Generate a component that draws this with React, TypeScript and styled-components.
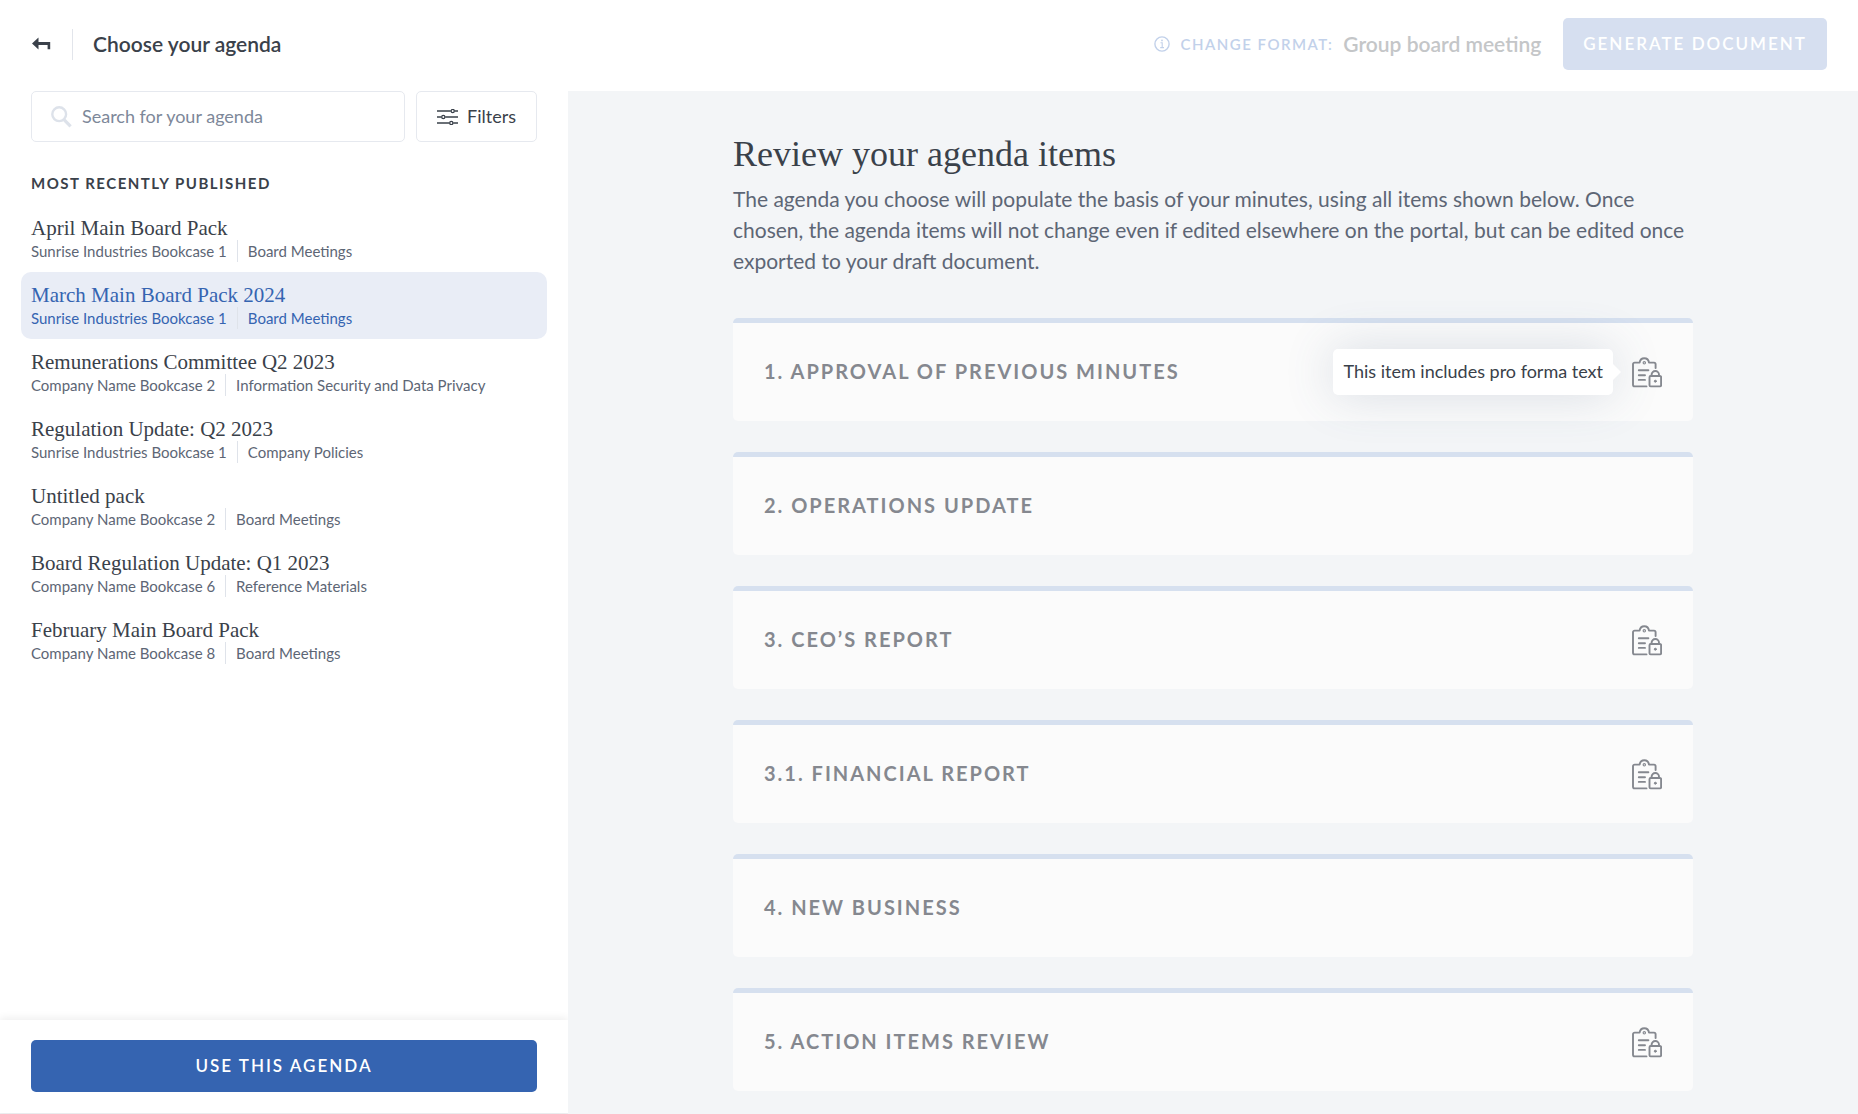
import React from "react";
import styled, { createGlobalStyle, css } from "styled-components";

const sans = `Lato, "Open Sans", "Liberation Sans", sans-serif`;
const serif = `"Liberation Serif", "Times New Roman", serif`;

const GlobalStyle = createGlobalStyle`
  *, *::before, *::after { box-sizing: border-box; }
  body { margin: 0; background: #fff; color: #3a414a; font-family: ${sans}; font-size: 18px; }
  h1, h2, h3, p, ul, ol { margin: 0; padding: 0; font-weight: 400; }
  ul, ol { list-style: none; }
  button, input { font: inherit; color: inherit; }
  svg { display: block; flex: none; }
`;

const Page = styled.div`
  min-height: 100vh;
  display: flex;
  flex-direction: column;
`;

const Header = styled.header`
  display: flex;
  align-items: center;
  justify-content: space-between;
  min-height: 91px;
  padding: 0 31px 3px;
`;

const HeaderGroup = styled.div`
  display: flex;
  align-items: center;
`;

const IconButton = styled.button`
  padding: 0;
  border: 0;
  background: none;
  cursor: pointer;
`;

const HeaderDivider = styled.span`
  width: 1px;
  height: 31px;
  margin: 0 20px 0 21px;
  background: #e2e5eb;
`;

const PageTitle = styled.h1`
  padding-bottom: 2px;
  font-size: 21px;
  font-weight: 600;
  line-height: 31px;
`;

const FormatButton = styled.button`
  display: flex;
  align-items: center;
  gap: 10px;
  padding: 0;
  border: 0;
  background: none;
  color: #c2d1ea;
`;

const FormatLabel = styled.span`
  font-size: 15px;
  font-weight: 600;
  letter-spacing: 1.5px;
`;

const FormatValue = styled.span`
  padding-bottom: 2px;
  color: #c4c6c8;
  font-size: 21px;
  font-weight: 600;
`;

const SolidButton = styled.button<{ $wide?: boolean }>`
  height: 52px;
  padding: 0 20px 2px;
  border: 0;
  border-radius: 5px;
  background: #3564b1;
  color: #fff;
  font-size: 17px;
  font-weight: 600;
  letter-spacing: 2px;
  cursor: pointer;
  ${(p) => p.$wide && css`width: 100%;`}
  &:disabled { background: #d6dff0; cursor: default; }
  ${HeaderGroup} & { margin-left: 22px; }
`;

const Body = styled.div`
  flex: 1;
  display: flex;
`;

const Sidebar = styled.aside`
  flex: none;
  width: 568px;
  display: flex;
  flex-direction: column;
  border-bottom: 1px solid #eff0f2;
`;

const SearchRow = styled.div`
  display: flex;
  gap: 11px;
  padding: 0 31px;
`;

const outlined = css`
  display: flex;
  align-items: center;
  height: 51px;
  border: 1px solid #e6e9ef;
  border-radius: 5px;
  background: #fff;
`;

const SearchField = styled.label`
  ${outlined}
  flex: 1;
  gap: 10px;
  padding: 0 19px;
`;

const SearchInput = styled.input`
  flex: 1;
  min-width: 0;
  padding: 0 0 2px;
  border: 0;
  outline: 0;
  background: none;
  &::placeholder { color: #7d8899; opacity: 1; }
`;

const FilterButton = styled.button`
  ${outlined}
  gap: 9px;
  padding: 0 20px;
  cursor: pointer;
`;

const FilterLabel = styled.span`
  padding-bottom: 2px;
`;

const SectionTitle = styled.h2`
  padding: 30px 31px 0;
  font-size: 15px;
  font-weight: 700;
  line-height: 22px;
  letter-spacing: 1.5px;
`;

const PackList = styled.ul`
  margin: 11px 21px 0;
`;

const PackButton = styled.button<{ $selected?: boolean }>`
  display: block;
  width: 100%;
  height: 67px;
  padding: 0 10px;
  border: 0;
  border-radius: 10px;
  background: ${(p) => (p.$selected ? "#e9edf6" : "transparent")};
  color: ${(p) => (p.$selected ? "#3564b1" : "#3a414a")};
  text-align: left;
  cursor: pointer;
`;

const PackName = styled.span`
  display: block;
  font-family: ${serif};
  font-size: 21px;
  line-height: 24px;
`;

const PackMeta = styled.span<{ $selected?: boolean }>`
  display: flex;
  align-items: center;
  height: 22px;
  color: ${(p) => (p.$selected ? "#3564b1" : "#5d6675")};
  font-size: 15px;
`;

const MetaDivider = styled.span`
  width: 1px;
  height: 22px;
  margin: 0 10px;
  background: #dfe3ea;
`;

const SidebarFooter = styled.div`
  margin-top: auto;
  padding: 20px 31px 21px;
  background: #fff;
  box-shadow: 0 -2px 8px rgba(0, 0, 0, 0.07);
`;

const Main = styled.main`
  flex: 1;
  min-width: 0;
  padding: 42px 31px 16px;
  background: #f3f5f7;
`;

const Content = styled.div`
  max-width: 960px;
  margin: 0 auto;
`;

const ReviewTitle = styled.h2`
  font-family: ${serif};
  font-size: 36px;
  line-height: 42px;
`;

const Intro = styled.p`
  padding-top: 8px;
  color: #5d6675;
  font-size: 21px;
  line-height: 31px;
`;

const AgendaList = styled.ol`
  display: grid;
  gap: 31px;
  margin-top: 42px;
`;

const AgendaCard = styled.li`
  display: flex;
  align-items: center;
  justify-content: space-between;
  height: 103px;
  padding: 0 31px;
  border-top: 5px solid #d6e0ef;
  border-radius: 5px;
  background: #fbfbfb;
`;

const AgendaName = styled.h3`
  padding-bottom: 2px;
  color: #85888f;
  font-size: 20px;
  font-weight: 700;
  letter-spacing: 2px;
  text-transform: uppercase;
`;

const ProForma = styled.span`
  position: relative;
  color: #85888f;
`;

const ProFormaIconBox = styled.span`
  position: relative;
  z-index: 1;
  display: block;
`;

const Tooltip = styled.span`
  position: absolute;
  top: 50%;
  right: calc(100% + 19px);
  transform: translateY(-50%);
  padding: 0 10px 2px;
  border-radius: 5px;
  background: #fff;
  box-shadow: 0 0 50px rgba(70, 95, 130, 0.2);
  color: #3a414a;
  font-size: 18px;
  line-height: 44px;
  white-space: nowrap;
  &::after {
    content: "";
    position: absolute;
    top: 15px;
    left: 100%;
    border: 8px solid transparent;
    border-left-color: #fff;
    border-right-width: 0;
  }
`;

const BackIcon = () => (
  <svg width="20" height="14" viewBox="0 0 20 14" aria-hidden="true">
    <path d="M1 6.500 7.500.500V4.900H19.200V12.300H16.600V8.100H7.500V12.500Z" fill="#3a414a" />
  </svg>
);

const InfoIcon = () => (
  <svg width="16" height="16" viewBox="0 0 16 16" fill="none" stroke="currentColor" aria-hidden="true">
    <circle cx="8" cy="8" r="7.1" strokeWidth="1.4" />
    <path d="M6.5 6.8H8.2v4.6M6.2 11.6h3.8" strokeWidth="1.1" />
    <circle cx="8" cy="4.4" r=".9" fill="currentColor" stroke="none" />
  </svg>
);

const SearchIcon = () => (
  <svg width="21" height="22" viewBox="0 0 21 22" fill="none" stroke="#dde2ea" aria-hidden="true">
    <circle cx="8.2" cy="8.2" r="6.9" strokeWidth="2.4" />
    <path d="m13 13.6 6.6 6.8" strokeWidth="3.2" />
  </svg>
);

const FilterIcon = () => (
  <svg width="21" height="16" viewBox="0 0 21 16" fill="none" stroke="#3a414a" strokeWidth="1.6" aria-hidden="true">
    <path d="M0 2h13.8M17.6 2H21M0 8h4.4M8.2 8H21M0 14h12.4M16.2 14H21" />
    <circle cx="15.7" cy="2" r="1.6" strokeWidth="1.3" />
    <circle cx="6.3" cy="8" r="1.6" strokeWidth="1.3" />
    <circle cx="14.3" cy="14" r="1.6" strokeWidth="1.3" />
  </svg>
);

const ProFormaIcon = () => (
  <svg
    width="30"
    height="31"
    viewBox="0 0 30 31"
    fill="none"
    stroke="currentColor"
    strokeWidth="1.9"
    strokeLinecap="round"
    strokeLinejoin="round"
    role="img"
    aria-label="Includes pro forma text"
  >
    <path d="M14.5 29.4H2.6a1.6 1.6 0 0 1-1.6-1.6V7.2a1.6 1.6 0 0 1 1.6-1.6h5C8 2.8 9.800 1.200 12.300 1.200S16.600 2.800 17 5.600h5a1.600 1.600 0 0 1 1.600 1.600V11" />
    <circle cx="12.300" cy="5.800" r="1.200" strokeWidth="1.100" />
    <path d="M6.800 13.300h9.600M6.800 18.200h6.200M6.800 22.900h6.200" />
    <rect x="17.500" y="19" width="11.600" height="10.400" rx="1.200" />
    <path d="M19.600 19v-1.300a3.700 3.700 0 0 1 7.400 0V19" />
    <circle cx="23.300" cy="24.200" r="1" fill="currentColor" strokeWidth="1" />
  </svg>
);

const packs = [
  { name: "April Main Board Pack", bookcase: "Sunrise Industries Bookcase 1", category: "Board Meetings" },
  { name: "March Main Board Pack 2024", bookcase: "Sunrise Industries Bookcase 1", category: "Board Meetings", selected: true },
  { name: "Remunerations Committee Q2 2023", bookcase: "Company Name Bookcase 2", category: "Information Security and Data Privacy" },
  { name: "Regulation Update: Q2 2023", bookcase: "Sunrise Industries Bookcase 1", category: "Company Policies" },
  { name: "Untitled pack", bookcase: "Company Name Bookcase 2", category: "Board Meetings" },
  { name: "Board Regulation Update: Q1 2023", bookcase: "Company Name Bookcase 6", category: "Reference Materials" },
  { name: "February Main Board Pack", bookcase: "Company Name Bookcase 8", category: "Board Meetings" },
];

const agenda = [
  { title: "1. Approval of previous minutes", proForma: true, tip: true },
  { title: "2. Operations update" },
  { title: "3. CEO’s report", proForma: true },
  { title: "3.1. Financial report", proForma: true },
  { title: "4. New business" },
  { title: "5. Action items review", proForma: true },
];

export default function App() {
  return (
    <Page>
      <GlobalStyle />
      <Header>
        <HeaderGroup>
          <IconButton type="button" aria-label="Back">
            <BackIcon />
          </IconButton>
          <HeaderDivider />
          <PageTitle>Choose your agenda</PageTitle>
        </HeaderGroup>
        <HeaderGroup>
          <FormatButton type="button" disabled>
            <InfoIcon />
            <FormatLabel>CHANGE FORMAT:</FormatLabel>
            <FormatValue>Group board meeting</FormatValue>
          </FormatButton>
          <SolidButton type="button" disabled>
            GENERATE DOCUMENT
          </SolidButton>
        </HeaderGroup>
      </Header>
      <Body>
        <Sidebar>
          <SearchRow>
            <SearchField>
              <SearchIcon />
              <SearchInput type="text" aria-label="Search for your agenda" placeholder="Search for your agenda" />
            </SearchField>
            <FilterButton type="button">
              <FilterIcon />
              <FilterLabel>Filters</FilterLabel>
            </FilterButton>
          </SearchRow>
          <SectionTitle>MOST RECENTLY PUBLISHED</SectionTitle>
          <PackList>
            {packs.map((pack) => (
              <li key={pack.name}>
                <PackButton type="button" $selected={pack.selected} aria-pressed={!!pack.selected}>
                  <PackName>{pack.name}</PackName>
                  <PackMeta $selected={pack.selected}>
                    {pack.bookcase}
                    <MetaDivider />
                    {pack.category}
                  </PackMeta>
                </PackButton>
              </li>
            ))}
          </PackList>
          <SidebarFooter>
            <SolidButton type="button" $wide>
              USE THIS AGENDA
            </SolidButton>
          </SidebarFooter>
        </Sidebar>
        <Main>
          <Content>
            <ReviewTitle>Review your agenda items</ReviewTitle>
            <Intro>
              The agenda you choose will populate the basis of your minutes, using all items shown below. Once chosen,
              the agenda items will not change even if edited elsewhere on the portal, but can be edited once exported
              to your draft document.
            </Intro>
            <AgendaList>
              {agenda.map((item) => (
                <AgendaCard key={item.title}>
                  <AgendaName>{item.title}</AgendaName>
                  {item.proForma && (
                    <ProForma>
                      {item.tip && <Tooltip role="tooltip">This item includes pro forma text</Tooltip>}
                      <ProFormaIconBox>
                        <ProFormaIcon />
                      </ProFormaIconBox>
                    </ProForma>
                  )}
                </AgendaCard>
              ))}
            </AgendaList>
          </Content>
        </Main>
      </Body>
    </Page>
  );
}
